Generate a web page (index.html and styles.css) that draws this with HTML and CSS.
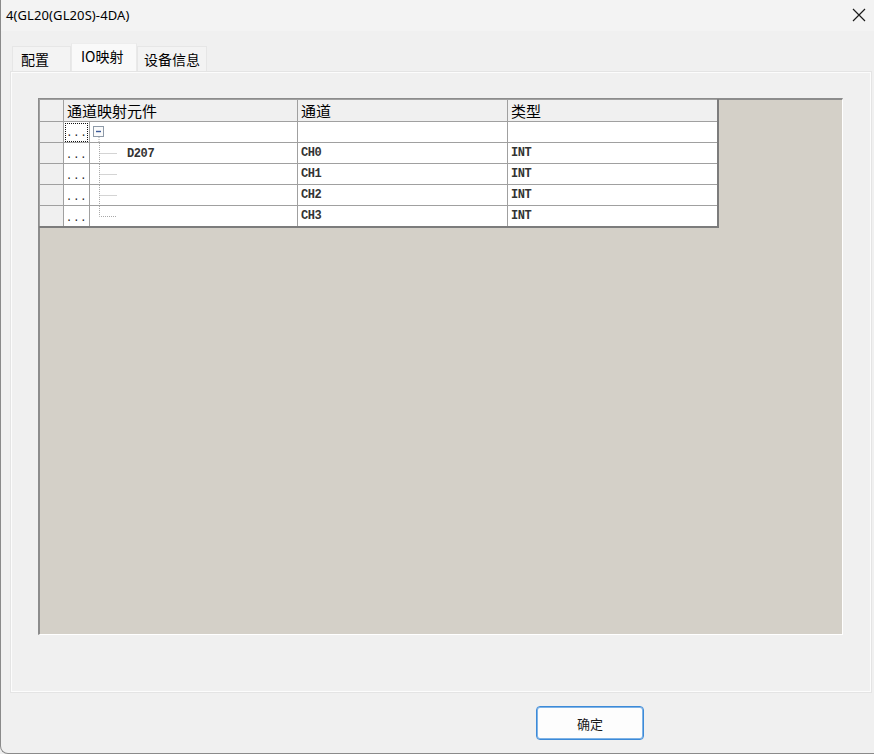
FILE: index.html
```html
<!DOCTYPE html>
<html lang="zh">
<head>
<meta charset="utf-8">
<title>4(GL20(GL20S)-4DA)</title>
<link rel="stylesheet" href="styles.css">
</head>
<body>
<div class="window">
  <div class="titlebar">
    <span class="title">4(GL20(GL20S)-4DA)</span>
    <svg class="close" width="14" height="14" viewBox="0 0 14 14"><path d="M1 1 L13 13 M13 1 L1 13" stroke="#1a1a1a" stroke-width="1.2" fill="none"/></svg>
  </div>
  <div class="content">
    <div class="tabs">
      <div class="tab tab-a">配置</div>
      <div class="tab tab-b active">IO映射</div>
      <div class="tab tab-c">设备信息</div>
    </div>
    <div class="panel">
      <div class="grid">
        <table class="sheet">
          <colgroup>
            <col class="c-rh"><col class="c-dots"><col class="c-tree"><col class="c-ch"><col class="c-type">
          </colgroup>
          <thead>
            <tr>
              <th class="rh"></th>
              <th colspan="2">通道映射元件</th>
              <th>通道</th>
              <th>类型</th>
            </tr>
          </thead>
          <tbody>
            <tr>
              <td class="rh"></td>
              <td class="dots"><span class="focus">...</span></td>
              <td class="tree"><svg width="30" height="20" viewBox="0 0 30 20"><rect x="3.5" y="4.5" width="10" height="10" fill="#fbfbfb" stroke="#8e9aa8"/><path d="M6 9.5 H11" stroke="#3b5a9a" stroke-width="1.4"/><path d="M9 15 V20" stroke="#a8a8a8" stroke-dasharray="1 1"/></svg></td>
              <td></td>
              <td></td>
            </tr>
            <tr>
              <td class="rh"></td>
              <td class="dots">...</td>
              <td class="tree"><svg width="30" height="20" viewBox="0 0 30 20"><path d="M9.5 0 V21 M9.5 10.5 H27" stroke="#a8a8a8" stroke-dasharray="1 1"/></svg><span class="val">D207</span></td>
              <td class="mono">CH0</td>
              <td class="mono">INT</td>
            </tr>
            <tr>
              <td class="rh"></td>
              <td class="dots">...</td>
              <td class="tree"><svg width="30" height="20" viewBox="0 0 30 20"><path d="M9.5 0 V21 M9.5 10.5 H27" stroke="#a8a8a8" stroke-dasharray="1 1"/></svg></td>
              <td class="mono">CH1</td>
              <td class="mono">INT</td>
            </tr>
            <tr>
              <td class="rh"></td>
              <td class="dots">...</td>
              <td class="tree"><svg width="30" height="20" viewBox="0 0 30 20"><path d="M9.5 0 V21 M9.5 10.5 H27" stroke="#a8a8a8" stroke-dasharray="1 1"/></svg></td>
              <td class="mono">CH2</td>
              <td class="mono">INT</td>
            </tr>
            <tr>
              <td class="rh"></td>
              <td class="dots">...</td>
              <td class="tree"><svg width="30" height="20" viewBox="0 0 30 20"><path d="M9.5 0 V10.5 H27" stroke="#a8a8a8" stroke-dasharray="1 1" fill="none"/></svg></td>
              <td class="mono">CH3</td>
              <td class="mono">INT</td>
            </tr>
          </tbody>
        </table>
      </div>
    </div>
    <div class="footer">
      <button class="ok">确定</button>
    </div>
  </div>
</div>
</body>
</html>
```

FILE: styles.css
```css
* { box-sizing: border-box; }
html, body { margin: 0; padding: 0; }
body { width: 874px; height: 754px; overflow: hidden; background: #f0f0f0; }

.window {
  width: 874px;
  height: 754px;
  background: #f0f0f0;
  border-left: 1px solid #8a8a8a;
  border-bottom: 1px solid #8a8a8a;
  border-bottom-left-radius: 8px;
  display: flex;
  flex-direction: column;
  font-family: "Noto Sans", "Noto Sans CJK SC", sans-serif;
  color: #000;
}

.titlebar {
  height: 31px;
  background: #f3f3f3;
  display: flex;
  align-items: center;
  justify-content: space-between;
  padding: 0 8px 2px 5px;
}
.title { font-size: 13px; letter-spacing: 0.1px; }
.close { display: block; margin-top: 1px; }

.content { padding: 12px 3px 0 10px; flex: 1; display: flex; flex-direction: column; }

.tabs { display: flex; align-items: flex-end; height: 29px; }
.tab {
  font-family: "Noto Sans CJK SC", sans-serif;
  font-size: 14px;
  height: 26px;
  line-height: 24px;
  background: #f3f3f3;
  border: 1px solid #e6e6e6;
  border-bottom: none;
}
.tab-a { width: 59px; padding-left: 8px; margin-left: 1px; }
.tab-b { width: 66px; padding-left: 9px; height: 29px; line-height: 25px; background: #f9f9f9; border-color: #e9e9e9; border-top-color: #ededed; }
.tab-c { width: 70px; padding-left: 6px; }

.panel {
  height: 620px;
  background: #f0f0f0;
  border: 1px solid #fcfcfc;
  box-shadow: 0 0 0 1px #e4e4e4;
  padding: 25px 26px;
}

.grid {
  width: 805px;
  height: 537px;
  background: #d4d0c8;
  border-top: 2px solid #8c8c8c;
  border-left: 2px solid #8c8c8c;
  border-right: 1px solid #fff;
  border-bottom: 1px solid #fff;
}

.sheet {
  border-collapse: collapse;
  table-layout: fixed;
  width: 678px;
  border-right: 2px solid #7c7c7c;
  border-bottom: 2px solid #7c7c7c;
  margin-top: -1px;
  margin-left: -1px;
}
.c-rh { width: 24px; }
.c-dots { width: 26px; }
.c-tree { width: 208px; }
.c-ch { width: 210px; }
.c-type { width: 210px; }

.sheet th, .sheet td {
  border: 1px solid #a0a0a0;
  padding: 0 0 0 3px;
  height: 21px;
  line-height: 18px;
  text-align: left;
  white-space: nowrap;
  overflow: hidden;
}
.sheet th {
  background: #f0f0f0;
  font-family: "Noto Sans CJK SC", sans-serif;
  font-weight: normal;
  font-size: 15px;
  line-height: 19px;
  height: 22px;
}
.sheet td { background: #fff; }
.sheet td.rh, .sheet th.rh { background: #f0f0f0; }

.mono {
  font-family: "Liberation Mono", monospace;
  font-size: 12px;
  letter-spacing: -0.4px;
  font-weight: bold;
  color: #333;
  line-height: 19px !important;
  vertical-align: bottom;
}

.dots {
  font-family: "Liberation Mono", monospace;
  font-size: 11px;
  padding: 0 !important;
  text-align: center !important;
  line-height: 16px !important;
  vertical-align: bottom;
  color: #222;
  letter-spacing: 0.5px;
}
.focus {
  display: block;
  margin: 0 1px;
  height: 19px;
  border: 1px dotted #111;
  line-height: 19px;
}

.tree { padding: 0 !important; vertical-align: top; line-height: 0 !important; }
.tree svg { display: inline-block; vertical-align: top; }
.val {
  display: inline-block;
  height: 20px;
  padding-top: 2px;
  font-family: "Liberation Mono", monospace;
  font-size: 12px;
  font-weight: bold;
  color: #333;
  line-height: 18px;
  vertical-align: top;
  margin-left: 7px;
  letter-spacing: -0.4px;
}

.footer { padding: 14px 0 0 525px; }
.ok {
  width: 108px;
  height: 34px;
  background: #fdfdfd;
  border: 1px solid #3c8ad8;
  border-radius: 4px;
  box-shadow: inset 0 0 0 1px #7fb3e6;
  font-family: "Noto Sans CJK SC", sans-serif;
  font-size: 13px;
  color: #1a1a1a;
  padding: 0;
}
```
